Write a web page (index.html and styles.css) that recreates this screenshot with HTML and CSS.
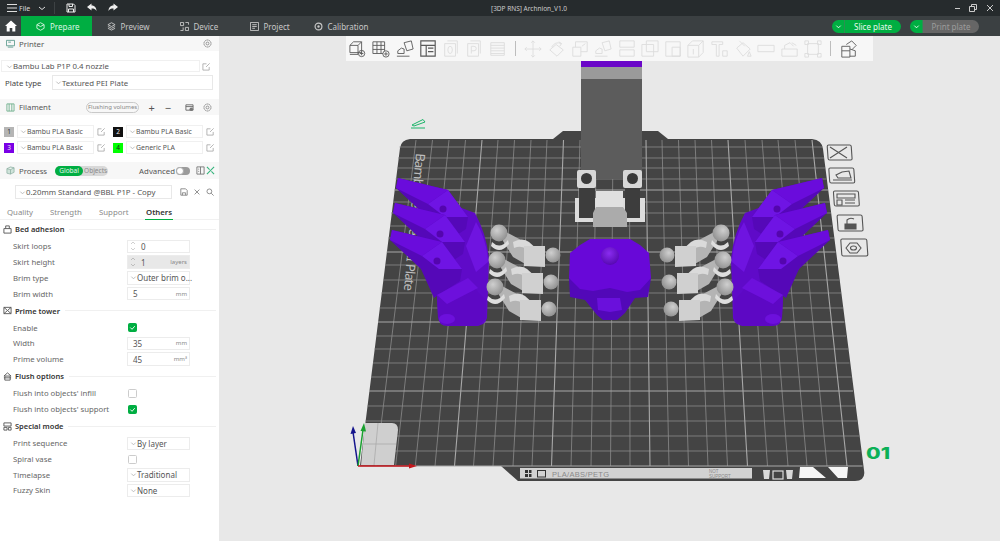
FILE: index.html
```
<!DOCTYPE html>
<html lang="en">
<head>
<meta charset="utf-8">
<title>[3DP RNS] Archnion_V1.0</title>
<link rel="stylesheet" href="styles.css">
</head>
<body>
<svg class="defs" width="0" height="0" aria-hidden="true">
  <defs>
    <radialGradient id="ball" cx="38%" cy="35%" r="70%"><stop offset="0" stop-color="#cfcfcf"/><stop offset="1" stop-color="#8f8f8f"/></radialGradient>
    <radialGradient id="pball" cx="45%" cy="35%" r="70%"><stop offset="0" stop-color="#8a2cf0"/><stop offset="1" stop-color="#5306ad"/></radialGradient>
    <symbol id="chev" viewBox="0 0 8 8"><path d="M1.5 3l2.5 2.5L6.5 3" fill="none" stroke="#b5b5b5"/></symbol>
    <symbol id="edit" viewBox="0 0 10 10"><path d="M8 5.5V9H1V2h4M4.5 5.5L8.5 1.5" fill="none" stroke="#9a9a9a" stroke-width=".8"/></symbol>
    <symbol id="gear" viewBox="0 0 10 10"><circle cx="5" cy="5" r="3.9" fill="none" stroke="#777" stroke-width=".9" stroke-dasharray="2 .4"/><circle cx="5" cy="5" r="1.6" fill="none" stroke="#777" stroke-width=".8"/></symbol>
    <g id="finger">
      <polygon points="398,178 448,190 468,217 466,229 440,246 427,217 396,188" fill="#5508b8"/>
      <polygon points="398,178 448,190 428,204 396,188" fill="#6a0cdc"/>
      <polygon points="428,204 448,190 468,217 445,217" fill="#6f14e4"/>
      <circle cx="443" cy="209" r="3.5" fill="#5405ae"/>
    </g>
    <g id="joint">
      <polygon points="5,-2 24,8 30,20 36,26 28,32 14,24 4,8" fill="#b4b4b4"/>
      <path d="M14 9Q28 1 38 18L31 20Q25 11 15 15Z" fill="#dadada"/>
      <polygon points="25,13 46,13 46,34 25,33" fill="#d0d0d0"/>
      <path d="M-7 9Q1 17 9 7L10 11Q1 22-8 13Z" fill="#dedede"/>
      <circle cx="0" cy="0" r="8.5" fill="url(#ball)"/>
      <circle cx="54" cy="22" r="7.5" fill="url(#ball)"/>
    </g>
    <g id="half">
      <path d="M440 200L475 213Q487 235 489 260L487 318Q485 326 475 326L448 326Q438 326 438 316L437 295L420 267Z" fill="#5f0ac8"/>
      <path d="M476 222Q487 240 488 262L476 272L466 246Z" fill="#6f14e0"/>
      <use href="#finger"/>
      <use href="#finger" transform="translate(-3 25)"/>
      <use href="#finger" transform="translate(-6 52)"/>
      <polygon points="437,295 468,280 478,292 486,300 486,318 478,326 448,326 438,318" fill="#5d08c4"/>
      <polygon points="437,295 468,278 478,288 447,304" fill="#6d10dc"/>
      <ellipse cx="447" cy="319" rx="8" ry="5" fill="#6d10dc"/>
      <use href="#joint" transform="translate(499 233)"/>
      <use href="#joint" transform="translate(497 260)"/>
      <use href="#joint" transform="translate(495 287)"/>
    </g>
  </defs>
</svg>

<header class="titlebar">
  <div class="file-menu">
    <svg class="ico10" viewBox="0 0 10 10"><path d="M0 1.5h10M0 5h10M0 8.5h10" stroke="#ddd" stroke-width="1"/></svg>
    <span class="file-label">File</span>
    <svg class="ico-chev" viewBox="0 0 8 8"><path d="M1 3l3 2.5L7 3" fill="none" stroke="#ddd"/></svg>
  </div>
  <div class="quick">
    <svg class="ico10" viewBox="0 0 10 10"><path d="M1 1h6.5L9 2.5V9H1Z M3 1v2.5h3.5V1M2.5 9V6h5v3" fill="none" stroke="#eee" stroke-width="1"/></svg>
    <svg class="ico10" viewBox="0 0 10 10"><path d="M0 4L4.5 0.5V2.5C8 2.5 9.5 5 9.5 8C8.5 6 7 5.5 4.5 5.5V7.5Z" fill="#eee"/></svg>
    <svg class="ico10" viewBox="0 0 10 10"><path d="M10 4L5.5 0.5V2.5C2 2.5 .5 5 .5 8C1.5 6 3 5.5 5.5 5.5V7.5Z" fill="#eee"/></svg>
  </div>
  <div class="doc-title">[3DP RNS] Archnion_V1.0</div>
  <div class="win-ctrl">
    <span class="win-min"></span>
    <svg class="ico8" viewBox="0 0 8 8"><path d="M2.5 2.5V.5h5v5h-2M.5 2.5h5v5h-5z" fill="none" stroke="#ccc"/></svg>
    <svg class="ico8" viewBox="0 0 8 8"><path d="M1 1l6 6M7 1L1 7" stroke="#ccc"/></svg>
  </div>
</header>

<nav class="tabbar">
  <div class="home"><svg class="ico12" viewBox="0 0 12 12"><path d="M6 .5L12 6H10.3V11.5H7.3V8H4.7V11.5H1.7V6H0Z" fill="#fff"/></svg></div>
  <div class="tab tab-active tab-prepare"><svg class="ico9" viewBox="0 0 10 10"><path d="M5 .8L9 3v4L5 9.2 1 7V3ZM1 3l4 2 4-2" fill="none" stroke="#d8f5e2"/></svg>Prepare</div>
  <div class="tab tab-preview"><svg class="ico9" viewBox="0 0 10 10"><path d="M5 .8L9 3 5 5 1 3ZM1 5l4 2 4-2M1 7l4 2 4-2" fill="none" stroke="#c8c8c8"/></svg>Preview</div>
  <div class="tab tab-device"><svg class="ico9" viewBox="0 0 10 10"><path d="M.5.5h3.500v3.500H.5zM6 .5h3.500M9.500.5V3M.5 9.500h3V6M6 6h3.500v3.500H6z" fill="none" stroke="#c8c8c8"/></svg>Device</div>
  <div class="tab tab-project"><svg class="ico9" viewBox="0 0 10 10"><path d="M.5.5h9v9h-9zM2.500 3h5M2.500 5h5M2.500 7h3" fill="none" stroke="#c8c8c8"/></svg>Project</div>
  <div class="tab tab-calib"><svg class="ico9" viewBox="0 0 10 10"><circle cx="5" cy="5" r="3.800" fill="none" stroke="#c8c8c8" stroke-width="1.300"/><circle cx="5" cy="5" r="1.300" fill="#c8c8c8"/></svg>Calibration</div>
  <div class="actions">
    <div class="pill pill-on"><span class="pill-drop"><svg class="ico-chev6" viewBox="0 0 8 8"><path d="M1.500 3L4 5.500 6.500 3" fill="none" stroke="#fff"/></svg></span><span class="pill-text">Slice plate</span></div>
    <div class="pill pill-off"><span class="pill-drop"><svg class="ico-chev6" viewBox="0 0 8 8"><path d="M1.500 3L4 5.500 6.500 3" fill="none" stroke="#fff"/></svg></span><span class="pill-text">Print plate</span></div>
  </div>
</nav>

<div class="workspace">
  <aside class="side">
    <div class="head head-printer">
      <svg class="ico-head" viewBox="0 0 10 10"><path d="M.5 1.500h9v6h-9zM2.500 3.500h3M2 9h6" fill="none" stroke="#5d9c8e"/></svg>
      <span class="head-title">Printer</span>
      <svg class="ico-gear head-end" viewBox="0 0 10 10"><use href="#gear"/></svg>
    </div>
    <div class="printer-row">
      <div class="combo combo-printer"><svg class="chev"><use href="#chev"/></svg>Bambu Lab P1P 0.4 nozzle</div>
      <svg class="ico-edit"><use href="#edit"/></svg>
    </div>
    <div class="plate-row">
      <span class="plate-label">Plate type</span>
      <div class="combo combo-plate"><svg class="chev"><use href="#chev"/></svg>Textured PEI Plate</div>
    </div>
    <div class="head head-filament">
      <svg class="ico-head" viewBox="0 0 10 10"><path d="M1 1h8v8H1zM3.500 1v8M6.500 1v8" fill="none" stroke="#6fb08d"/></svg>
      <span class="head-title">Filament</span>
      <span class="flush-btn">Flushing volumes</span>
      <span class="plus">+</span><span class="minus">−</span>
      <svg class="ico-gear" viewBox="0 0 10 10"><path d="M1 2h8v6H1zM1 4h8" fill="none" stroke="#666"/><circle cx="7" cy="7" r="2" fill="#777"/></svg>
      <svg class="ico-gear" viewBox="0 0 10 10"><use href="#gear"/></svg>
    </div>
    <div class="filaments">
      <div class="fil"><span class="chip chip-gray">1</span><div class="combo combo-fil"><svg class="chev"><use href="#chev"/></svg>Bambu PLA Basic</div><svg class="ico-edit"><use href="#edit"/></svg></div>
      <div class="fil"><span class="chip chip-black">2</span><div class="combo combo-fil"><svg class="chev"><use href="#chev"/></svg>Bambu PLA Basic</div><svg class="ico-edit"><use href="#edit"/></svg></div>
      <div class="fil"><span class="chip chip-purple">3</span><div class="combo combo-fil"><svg class="chev"><use href="#chev"/></svg>Bambu PLA Basic</div><svg class="ico-edit"><use href="#edit"/></svg></div>
      <div class="fil"><span class="chip chip-green">4</span><div class="combo combo-fil"><svg class="chev"><use href="#chev"/></svg>Generic PLA</div><svg class="ico-edit"><use href="#edit"/></svg></div>
    </div>
    <div class="head head-process">
      <svg class="ico-head" viewBox="0 0 10 10"><path d="M1 3l4-2 4 1v5L5 9 1 8ZM1 3l4 1 4-2M5 4v5" fill="#cfe3da" stroke="#7fa598" stroke-width=".7"/></svg>
      <span class="head-title">Process</span>
      <div class="toggle"><span class="toggle-on">Global</span><span class="toggle-off">Objects</span></div>
      <span class="adv">Advanced</span>
      <span class="switch"><span class="knob"></span></span>
      <svg class="ico-gear" viewBox="0 0 10 10"><path d="M1 1h8v8H1zM5 1v8M2.500 3.500h1M2.500 6h1" fill="none" stroke="#777"/></svg>
      <svg class="ico-gear" viewBox="0 0 10 10"><path d="M1 1l3 3M1 9l8-8M6 6l3 3" stroke="#34b37b" stroke-width="1.200"/></svg>
    </div>
    <div class="preset-row">
      <div class="combo combo-preset"><svg class="chev"><use href="#chev"/></svg>0.20mm Standard @BBL P1P - Copy</div>
      <svg class="ico-tool" viewBox="0 0 10 10"><path d="M1 1h6l2 2v6H1ZM3 9V6h4v3" fill="none" stroke="#777"/></svg>
      <svg class="ico-tool" viewBox="0 0 10 10"><path d="M2 2l6 6M8 2L2 8" stroke="#777"/></svg>
      <svg class="ico-tool" viewBox="0 0 10 10"><circle cx="4.200" cy="4.200" r="3" fill="none" stroke="#777"/><path d="M6.500 6.500L9.500 9.500" stroke="#777"/></svg>
    </div>
    <div class="subtabs">
      <span class="subtab st-q">Quality</span>
      <span class="subtab st-s">Strength</span>
      <span class="subtab st-u">Support</span>
      <span class="subtab st-o">Others</span>
    </div>

    <div class="group"><svg class="ico-group" viewBox="0 0 10 10"><path d="M1 4h8v5H1zM3 4V1h4v3" fill="none" stroke="#555"/></svg><b>Bed adhesion</b><i class="rule"></i></div>
    <div class="row"><span class="lbl">Skirt loops</span><div class="ctl"><svg class="spin" viewBox="0 0 6 10"><path d="M1 3l2-2 2 2M1 7l2 2 2-2" fill="none" stroke="#bbb" stroke-width=".7"/></svg>0</div></div>
    <div class="row"><span class="lbl">Skirt height</span><div class="ctl ctl-off"><svg class="spin" viewBox="0 0 6 10"><path d="M1 3l2-2 2 2M1 7l2 2 2-2" fill="none" stroke="#aaa" stroke-width=".7"/></svg>1<span class="unit">layers</span></div></div>
    <div class="row"><span class="lbl">Brim type</span><div class="ctl"><svg class="chev"><use href="#chev"/></svg>Outer brim o...</div></div>
    <div class="row"><span class="lbl">Brim width</span><div class="ctl ctl-num">5<span class="unit">mm</span></div></div>

    <div class="group"><svg class="ico-group" viewBox="0 0 10 10"><path d="M1 1.500h8v7H1zM1 1.500l4 3.500 4-3.500M1 8.500l4-3.500 4 3.500" fill="none" stroke="#555"/></svg><b>Prime tower</b><i class="rule"></i></div>
    <div class="row"><span class="lbl">Enable</span><span class="check check-on"><svg viewBox="0 0 10 10"><path d="M2.500 5l2 2 3-3.500" fill="none" stroke="#fff"/></svg></span></div>
    <div class="row"><span class="lbl">Width</span><div class="ctl ctl-num">35<span class="unit">mm</span></div></div>
    <div class="row"><span class="lbl">Prime volume</span><div class="ctl ctl-num">45<span class="unit">mm³</span></div></div>

    <div class="group"><svg class="ico-group" viewBox="0 0 10 10"><path d="M1 4.500L5 1l4 3.500M2 4.500h6V9H2zM1 6.500h8" fill="none" stroke="#555"/></svg><b>Flush options</b><i class="rule"></i></div>
    <div class="row"><span class="lbl">Flush into objects' infill</span><span class="check"></span></div>
    <div class="row"><span class="lbl">Flush into objects' support</span><span class="check check-on"><svg viewBox="0 0 10 10"><path d="M2.500 5l2 2 3-3.500" fill="none" stroke="#fff"/></svg></span></div>

    <div class="group"><svg class="ico-group" viewBox="0 0 10 10"><path d="M1 1h8v3.500H1zM1 6h3.500v3H1zM6 6h3v3H6z" fill="none" stroke="#555"/></svg><b>Special mode</b><i class="rule"></i></div>
    <div class="row"><span class="lbl">Print sequence</span><div class="ctl"><svg class="chev"><use href="#chev"/></svg>By layer</div></div>
    <div class="row"><span class="lbl">Spiral vase</span><span class="check"></span></div>
    <div class="row"><span class="lbl">Timelapse</span><div class="ctl"><svg class="chev"><use href="#chev"/></svg>Traditional</div></div>
    <div class="row"><span class="lbl">Fuzzy Skin</span><div class="ctl"><svg class="chev"><use href="#chev"/></svg>None</div></div>
  </aside>

  <main class="stage">
    <svg class="scene" viewBox="219 36 781 505" aria-label="Build plate">
      <path d="M400 148Q401 140 410 139L553 139L563 131L658 131L668 139L812 139Q822 140 823 149L864 470Q866 481 855 481L518 481L501 466L360 466Z" fill="#444"/>
      <path d="M399.500 147H822.500M398 158H824M397 168H825M395.500 179H826.500M393 202H829.500M391 213H831M390 226H832M388 238H834M385 265H837M383 280H839M381.500 293H841M379.500 308H843M376 336H846M374.500 349H848M373 363H849.500M371 377H851.500M367.500 406H855M365.500 421H857M364 436H859M362 451H860.500M416 140L376 466M432.500 140L395.600 466M449 140L415.300 466M465.500 140L435 466M498 140L473.500 466M514.500 140L493 466M531 140L513 466M547 140L532 466M580 140L571 466M596.500 140L591 466M613 140L610.500 466M629.500 140L630 466M662 140L669 466M678.500 140L688.500 466M695 140L708 466M711.500 140L727.500 466M745 140L767.500 466M762 140L788 466M778 140L807 466M795 140L827 466" stroke="#8c8c8c" stroke-width=".8" fill="none"/>
      <path d="M394 190H828M386.500 252H835.500M378 322H844.500M369 391H853M360 466H862.500M482 140L454.500 466M563.500 140L551.500 466M646 140L650 466M728 140L747.500 466M812 140L847 466" stroke="#a8a8a8" stroke-width="1.100" fill="none"/>
      <path d="M365 423H392Q398 423 398 430L394 465H361Z" fill="#cfcfcf"/>
      <path d="M378 423L374 465M362 444H396" stroke="#aaa" stroke-width=".8"/>
      <text class="plate-name" transform="translate(416 153) rotate(95)" textLength="138">Bambu Textured PEI Plate</text>
      <path d="M358 466L353 432" stroke="#14148c" stroke-width="1.500"/><path d="M353 426L350.500 434L356 433Z" fill="#14148c"/>
      <path d="M358 466L363 430" stroke="#18a02e" stroke-width="1.500"/><path d="M364 423L360.500 431L366 431.500Z" fill="#18a02e"/>
      <path d="M358 466H410" stroke="#c4161c" stroke-width="1.500"/><path d="M417 466L409 463.500V468.500Z" fill="#c4161c"/>
      <path d="M412 125L423 119.500L425 122L414 126ZM411 128H425" fill="none" stroke="#1db56a" stroke-width="1"/>
      <rect x="520" y="468" width="232" height="10.500" fill="#d2d2d2"/>
      <path d="M525 470h3v3h-3zM529 470h2.500v3H529zM525 474h3v3h-3zM529 474h2.500v3H529z" fill="#333"/>
      <rect x="537.500" y="470.500" width="8" height="6.500" fill="none" stroke="#333" stroke-width="1"/>
      <text class="plate-bar" x="552" y="476.500">PLA/ABS/PETG</text>
      <text class="plate-mini" x="709" y="472.500">NOT</text><text class="plate-mini" x="709" y="477.500">SUPPORT</text>
      <path d="M763 470h7l-1 9h-5ZM786 470h7l-1 9h-5Z" fill="#d8d8d8"/>
      <rect x="773" y="471" width="10" height="8" fill="none" stroke="#ddd" stroke-width="1.200"/>
      <path d="M800 467H813L826 478H799ZM828 467H848L847 478H838Z" fill="#f5f5f5"/>
      <text class="plate-num" x="866" y="459" textLength="24" lengthAdjust="spacingAndGlyphs">01</text>

      <rect x="581" y="60" width="61" height="8" fill="#6a06c8"/>
      <rect x="581" y="67" width="61" height="12" fill="#9a9a9a"/>
      <rect x="581" y="79" width="61" height="100" fill="#5c5c5c"/>
      <path d="M575 198H645V222H575Z" fill="#dcdcdc"/>
      <rect x="579" y="186" width="16" height="32" fill="#3d3d3d"/>
      <rect x="625" y="186" width="15" height="32" fill="#3d3d3d"/>
      <path d="M596 191H623V207H596Z" fill="#e0e0e0"/>
      <path d="M596 207H623L627 213V227H593V213Z" fill="#ababab"/>
      <rect x="577" y="170" width="19" height="18" rx="2" fill="#d8d8d8"/><circle cx="586.500" cy="178.500" r="5.500" fill="#3a3a3a"/>
      <rect x="623" y="170" width="19" height="18" rx="2" fill="#d8d8d8"/><circle cx="632.500" cy="178.500" r="5.500" fill="#3a3a3a"/>

      <use href="#half"/>
      <use href="#half" transform="translate(1220 0) scale(-1 1)"/>

      <polygon points="569,278 570,297 585,300 597,315 603,320 617,320 625,313 635,298 648,297 651,278" fill="#5208b8"/>
      <polygon points="590,239 630,239 640,245 649,253 651,278 640,290 627,292 610,288 593,291 580,289 569,278 570,253 580,245" fill="#6808d8"/>
      <polygon points="597,298 620,298 622,310 610,312 598,310" fill="#6a10dc"/>
      <circle cx="610" cy="256" r="9" fill="url(#pball)"/>

      <g class="plate-tools">
        <rect x="827" y="145" width="24" height="15" rx="1.500" transform="skewX(4) translate(-10 0)"/>
        <path d="M830 147L847 158M847 147L830 158"/>
        <rect x="829" y="168" width="25" height="15" rx="1.500" transform="skewX(4) translate(-12 0)"/>
        <path d="M833 180L852 180M836 175L842 172L849 171L851 178L838 178Z"/>
        <rect x="834" y="191" width="25" height="15" rx="1.500" transform="skewX(4) translate(-14 0)"/>
        <path d="M837 194H855V198H837ZM837 200H842V205H837ZM845 200H855M845 203H855"/>
        <rect x="838" y="215" width="25" height="16" rx="1.500" transform="skewX(4) translate(-16 0)"/>
        <path class="lock-body" d="M845 224H856V229H845Z"/><path d="M847 224V220Q850 217 854 219"/>
        <rect x="842" y="239" width="26" height="17" rx="1.500" transform="skewX(4) translate(-18 0)"/>
        <path d="M846 248L850 243H857L861 248L857 253H850Z"/><ellipse cx="853.500" cy="248" rx="3" ry="2"/>
      </g>
    </svg>

    <div class="toolbar">
      <svg class="tool" viewBox="0 0 20 20"><path d="M1 6L5 2H14V14H1ZM1 6H10V16H1M10 6L14 2"/><circle cx="14" cy="15" r="3.500"/><path d="M12 15h4M14 13v4"/></svg>
      <svg class="tool" viewBox="0 0 20 20"><path d="M1 2h13v13H1zM1 6h13M1 10.500h13M5.500 2v13M10 2v13"/><circle cx="15.500" cy="15.500" r="3.500" fill="#f7f7f7"/><path d="M13.500 15.500h4M15.500 13.500v4"/></svg>
      <svg class="tool" viewBox="0 0 20 20"><path d="M9 3L17 1L19 10L12 12ZM2 12L6 9L9 10L9 15H2ZM1 18H15"/></svg>
      <svg class="tool" viewBox="0 0 20 20"><path d="M2 1h16v17H2zM2 6h16M8 6v12M10 9h6M10 13h6" stroke-width="1.300"/></svg>
      <svg class="tool tool-off" viewBox="0 0 20 20"><path d="M3 4h12v14H3zM6 1h11v14"/><ellipse cx="9" cy="11" rx="2.500" ry="4"/></svg>
      <svg class="tool tool-off" viewBox="0 0 20 20"><path d="M3 4h12v14H3zM6 1h11v14M7 15V7h3a2 2 0 010 5H7"/></svg>
      <svg class="tool tool-off" viewBox="0 0 20 20"><path d="M2 3h15v14H2zM2 6h15M2 9h15M2 12h15M2 15h15"/></svg>
      <span class="tool-sep"></span>
      <svg class="tool tool-off" viewBox="0 0 20 20"><path d="M10 1v18M1 10h18M10 1l-2 2M10 1l2 2M10 19l-2-2M10 19l2-2M1 10l2-2M1 10l2 2M19 10l-2-2M19 10l-2 2"/></svg>
      <svg class="tool tool-off" viewBox="0 0 20 20"><path d="M9 5L17 11L10 18L2 11ZM4 8Q8 1 15 4M15 4l-3-2M15 4l-2 3"/></svg>
      <svg class="tool tool-off" viewBox="0 0 20 20"><path d="M2 8h9v10H2zM5 8V2h13v11h-7M12 7l4-3"/></svg>
      <svg class="tool tool-off" viewBox="0 0 20 20"><path d="M9 3L17 1L19 10L12 12ZM2 12L6 9L9 10L9 15H2ZM1 18H15"/></svg>
      <svg class="tool tool-off" viewBox="0 0 20 20"><path d="M2 1h16v7H2zM2 11h16v7H2z"/></svg>
      <svg class="tool tool-off" viewBox="0 0 20 20"><path d="M1 5h13v13H1zM6 1h13v12H6z"/></svg>
      <svg class="tool tool-off" viewBox="0 0 20 20"><path d="M2 2h16v16H2zM9 8h9v10H9z"/></svg>
      <svg class="tool tool-off" viewBox="0 0 20 20"><path d="M1 6L6 1H18V14L13 19H1ZM1 6H13V19M13 6L18 1M7 10V16"/></svg>
      <svg class="tool tool-off" viewBox="0 0 20 20"><path d="M1 2H13V5H9V18H6V5H1ZM13 12h5v6h-5z"/></svg>
      <svg class="tool tool-off" viewBox="0 0 20 20"><path d="M3 9L10 3L18 10L10 18ZM6 1L12 7M17 13l2 5h-4z"/></svg>
      <svg class="tool tool-off" viewBox="0 0 20 20"><path d="M1 6h18v7H1z"/></svg>
      <svg class="tool tool-off" viewBox="0 0 20 20"><path d="M1 10h17v8H1zM4 10V6L10 3L14 7M12 3L17 6"/></svg>
      <svg class="tool tool-off" viewBox="0 0 20 20"><path d="M4 4h12v12H4zM1 1h4v4H1zM15 1h4v4h-4zM1 15h4v4H1zM15 15h4v4h-4z"/></svg>
      <span class="tool-sep"></span>
      <svg class="tool" viewBox="0 0 20 20"><path d="M2 7h9v12H2zM2 12h9M7 5L13 1L18 6L13 11M11 10L17 12V18H11"/></svg>
    </div>
  </main>
</div>
</body>
</html>
```
FILE: styles.css
```
* { box-sizing: border-box; }
html, body { margin: 0; height: 541px; overflow: hidden; }
body {
  display: flex;
  flex-direction: column;
  font-family: "Noto Sans", "Liberation Sans", sans-serif;
  font-size: 8px;
  color: #555;
  background: #e8e8e8;
}
.defs { position: absolute; }

/* Title bar */
.titlebar { height: 16px; background: #262b2d; display: flex; align-items: center; color: #ddd; flex: none; }
.file-menu { display: flex; align-items: center; width: 55px; padding-left: 7px; border-right: 1px solid #3d4244; height: 12px; }
.ico10 { width: 10px; height: 10px; }
.ico8 { width: 8px; height: 8px; }
.ico9 { width: 9px; height: 9px; margin-right: 5px; }
.ico12 { width: 12px; height: 12px; }
.file-label { font-size: 7px; margin-left: 2px; width: 19px; }
.ico-chev { width: 8px; height: 8px; }
.quick { display: flex; gap: 11px; margin-left: 11px; }
.doc-title { margin-left: 373px; font-size: 6.5px; width: 74px; white-space: nowrap; color: #ccc; }
.win-ctrl { margin-left: auto; display: flex; align-items: center; gap: 9px; padding-right: 6px; }
.win-min { width: 5px; height: 1px; background: #ccc; }

/* Main tab bar */
.tabbar { height: 20px; background: #3b4042; display: flex; align-items: center; flex: none; color: #c8c8c8; font-size: 8px; }
.home { width: 21px; display: flex; justify-content: center; }
.tab { display: flex; align-items: center; height: 100%; white-space: nowrap; }
.tab-active { background: #00ae42; color: #d8f5e2; }
.tab-prepare { width: 71px; padding-left: 15px; }
.tab-preview { margin-left: 14.500px; width: 73px; }
.tab-device { width: 70px; }
.tab-project { width: 64px; }
.tab-calib { width: 60px; }
.actions { margin-left: auto; display: flex; gap: 9px; padding-right: 21px; }
.pill { width: 69px; height: 13px; border-radius: 7px; display: flex; overflow: hidden; font-size: 8px; }
.pill-drop { width: 13px; background: #00ae42; display: flex; align-items: center; justify-content: center; border-right: 1px solid #2c8f52; }
.ico-chev6 { width: 7px; height: 7px; }
.pill-text { flex: 1; text-align: center; line-height: 13px; }
.pill-on .pill-text { background: #00ae42; color: #e9fbf0; }
.pill-off .pill-text { background: #666; color: #9c9c9c; }

/* Workspace */
.workspace { flex: 1; display: flex; min-height: 0; }
.side { width: 219px; flex: none; background: #fff; display: flex; flex-direction: column; }

.head { display: flex; align-items: center; background: #f7f7f7; padding-left: 6px; flex: none; }
.head-printer { height: 15px; padding-right: 7px; }
.head-filament { height: 16px; margin-top: 9px; padding-right: 7px; }
.head-process { height: 17px; margin-top: 8px; padding-right: 3px; }
.ico-head { width: 9px; height: 9px; margin-right: 4px; }
.head-title { font-size: 7.800px; color: #555; }
.head-end { margin-left: auto; }
.ico-gear { width: 9px; height: 9px; }
.flush-btn { margin-left: 35px; width: 54px; height: 11px; border: 1px solid #c9c9c9; border-radius: 6px; font-size: 6px; line-height: 9px; text-align: center; color: #888; white-space: nowrap; }
.plus, .minus { font-size: 11px; line-height: 11px; color: #555; }
.plus { margin-left: 9px; }
.minus { margin-left: 10px; margin-right: 14px; }
.head-filament .ico-gear + .ico-gear { margin-left: 9px; }

.combo { display: flex; align-items: center; background: #fff; border: 1px solid #f0f0f0; white-space: nowrap; color: #555; }
.chev { width: 7px; height: 7px; flex: none; }
.ico-edit { width: 9px; height: 9px; flex: none; }

.printer-row { display: flex; align-items: center; margin-top: 9px; height: 12px; padding-left: 1px; font-size: 7.800px; }
.combo-printer { width: 199px; height: 12px; padding-left: 4px; }
.printer-row .ico-edit { margin-left: 2px; }
.plate-row { display: flex; align-items: center; margin-top: 3px; height: 15px; padding-left: 5px; font-size: 7.800px; }
.plate-label { width: 47px; color: #444; }
.combo-plate { width: 161px; height: 15px; border-color: #e8e8e8; padding-left: 2px; }

.filaments { display: grid; grid-template-columns: 109px 106px; row-gap: 3px; padding: 10px 0 0 4px; }
.fil { display: flex; align-items: center; height: 13px; }
.chip { width: 10px; height: 10px; font-size: 6.500px; line-height: 10px; text-align: center; flex: none; }
.chip-gray { background: #b5b5b5; color: #333; }
.chip-black { background: #111; color: #eee; }
.chip-purple { background: #7a00e6; color: #eee; }
.chip-green { background: #0f0; color: #222; }
.combo-fil { width: 77px; height: 13px; margin-left: 3px; font-size: 6.900px; padding-left: 2px; }
.fil .ico-edit { margin-left: 3px; }

.toggle { margin-left: 8px; display: flex; height: 10px; width: 53px; background: #d8d8d8; border-radius: 5px; font-size: 6.500px; line-height: 10px; }
.toggle-on { background: #00ae42; color: #e4f8ec; width: 28px; text-align: center; border-radius: 5px; }
.toggle-off { color: #8a8a8a; padding-left: 1px; }
.adv { margin-left: 31px; font-size: 7.800px; width: 36px; white-space: nowrap; }
.switch { margin-left: 1px; width: 14px; height: 8px; background: #9b9b9b; border-radius: 4px; position: relative; margin-right: 6px; }
.knob { position: absolute; left: 0; top: 0; width: 8px; height: 8px; background: #fff; border: 1px solid #aaa; border-radius: 50%; }
.head-process .ico-gear + .ico-gear { margin-left: 1px; }

.preset-row { display: flex; align-items: center; margin-top: 6px; height: 14px; padding-left: 15px; font-size: 7.800px; }
.combo-preset { width: 157px; height: 14px; border-color: #e8e8e8; padding-left: 3px; }
.ico-tool { width: 8px; height: 8px; margin-left: 5px; }
.preset-row .ico-tool:first-of-type { margin-left: 8px; }

.subtabs { display: flex; height: 14px; margin-top: 7px; font-size: 7.800px; color: #8a8a8a; border-bottom: 1px solid #f1f1f1; line-height: 13px; }
.subtab { white-space: nowrap; }
.st-q { margin-left: 7px; width: 43px; }
.st-s { width: 49px; }
.st-u { width: 47px; }
.st-o { width: 28px; margin-left: -1px; padding-left: 1px; color: #333; font-weight: 600; border-bottom: 1px solid #00ae42; height: 14px; }

.group { height: 18.600px; display: flex; align-items: center; padding-left: 3px; color: #333; flex: none; }
.group b { font-size: 7.500px; font-weight: 600; white-space: nowrap; }
.ico-group { width: 9px; height: 9px; margin-right: 3px; }
.rule { flex: 1; height: 1px; background: #f0f0f0; margin: 0 3px 0 5px; }

.row { height: 15.700px; display: flex; align-items: center; padding-left: 13px; flex: none; }
.lbl { width: 114px; font-size: 7.750px; color: #666; white-space: nowrap; }
.ctl { width: 63px; height: 13.500px; border: 1px solid #ececec; display: flex; align-items: center; padding-left: 2px; font-size: 8px; color: #555; white-space: nowrap; }
.ctl-off { background: #e8e8e8; }
.ctl-num { padding-left: 5px; }
.spin { width: 6px; height: 10px; margin-right: 5px; flex: none; }
.unit { margin-left: auto; padding-right: 2px; font-size: 6px; color: #888; }
.check { width: 9px; height: 9px; margin-left: 1px; border: 1px solid #ccc; border-radius: 1.500px; background: #fff; display: block; }
.check svg { display: block; width: 9px; height: 9px; margin: -1px; }
.check-on { background: #00ae42; border-color: #00ae42; }

/* Stage */
.stage { flex: 1; position: relative; background: #e8e8e8; overflow: hidden; }
.scene { width: 781px; height: 505px; display: block; }
.plate-name { font-family: "Noto Sans", sans-serif; font-size: 13px; fill: #bdbdbd; }
.plate-bar { font-family: "Liberation Sans", sans-serif; font-size: 7.500px; fill: #8a8a8a; letter-spacing: .3px; }
.plate-mini { font-family: "Liberation Sans", sans-serif; font-size: 4.500px; fill: #8a8a8a; }
.plate-num { font-family: "Inter", sans-serif; font-size: 16px; font-weight: 800; fill: #0cb057; }
.plate-tools { fill: none; stroke: #555; stroke-width: 1.100; }
.plate-tools .lock-body { fill: #555; }

.toolbar { position: absolute; left: 127px; top: 0; width: 527px; height: 25px; background: #f7f7f7; display: flex; align-items: center; padding-left: 3px; gap: 5.300px; }
.tool { width: 18px; height: 18px; flex: none; fill: none; stroke: #5a5a5a; stroke-width: 1; }
.tool-off { stroke: #dcdcdc; }
.tool-sep { width: 1px; height: 15px; background: #bdbdbd; margin: 0 3px; flex: none; }
```
